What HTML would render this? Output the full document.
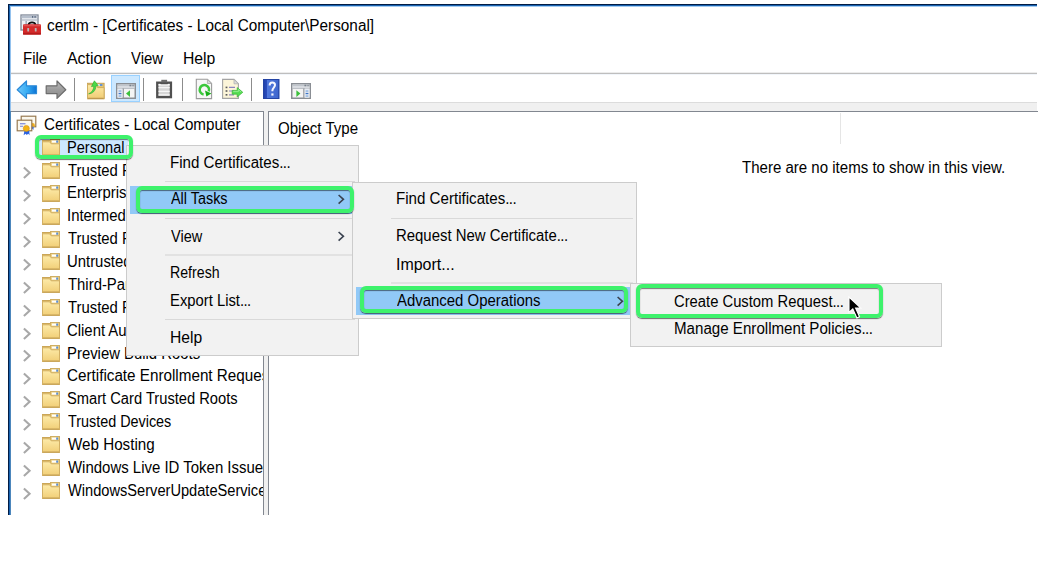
<!DOCTYPE html>
<html><head><meta charset="utf-8">
<style>
html,body{margin:0;padding:0;width:1045px;height:567px;overflow:hidden;background:#fff;}
body{position:relative;font-family:"Liberation Sans",sans-serif;font-size:15px;color:#000;}
.a{position:absolute;}
.t{position:absolute;white-space:nowrap;font-size:16px;line-height:17px;height:17px;transform-origin:0 0;}
.menu{position:absolute;background:#f2f2f2;border:1px solid #cccccc;box-sizing:border-box;}
.sep{position:absolute;height:1px;background:#d7d7d7;}
.grn{position:absolute;box-sizing:border-box;border:4px solid #3ef26c;border-radius:6px;box-shadow:0 1px 1px rgba(0,0,0,0.55), inset 0 1px 1px rgba(0,0,0,0.5);}
</style></head><body>
<div class="a" style="left:8px;top:4px;width:1029px;height:1px;background:#021c44"></div>
<div class="a" style="left:9px;top:5px;width:1028px;height:1px;background:#1862b0"></div>
<div class="a" style="left:10px;top:6px;width:1027px;height:1px;background:#a4ccf2"></div>
<div class="a" style="left:8px;top:4px;width:1px;height:511px;background:#021c44"></div>
<div class="a" style="left:9px;top:5px;width:1px;height:510px;background:#1862b0"></div>
<div class="a" style="left:10px;top:6px;width:1px;height:105px;background:#94c2ee"></div>
<div class="a" style="left:10px;top:111px;width:1px;height:404px;background:#4c86bc"></div>
<div class="a" style="left:11px;top:111px;width:1px;height:404px;background:#a4a8ac"></div>

<svg class="a" style="left:20px;top:14px" width="22" height="23" viewBox="0 0 22 23">
 <rect x="1" y="1" width="17" height="15" fill="#eef0f4" stroke="#7e8796" stroke-width="1.3"/>
 <rect x="1.6" y="1.6" width="15.8" height="2.6" fill="#b6bfcc"/>
 <rect x="12" y="2" width="1.2" height="1.8" fill="#5a6a80"/><rect x="14.5" y="2" width="1.2" height="1.8" fill="#5a6a80"/>
 <rect x="1.6" y="5.4" width="15.8" height="1.2" fill="#b0b8c4"/>
 <rect x="5.6" y="7" width="1" height="9" fill="#7a8aa0"/>
 <path d="M8.3 10.8C9.3 7.6 14.7 7.6 15.7 10.8" fill="none" stroke="#111" stroke-width="1.8"/>
 <rect x="3" y="10.3" width="18" height="10.3" rx="1" fill="#d42a2a"/>
 <rect x="3" y="18.8" width="18" height="1.8" fill="#b51c1c"/>
 <rect x="3.5" y="11" width="17" height="1.3" fill="#e25050"/>
 <rect x="7.3" y="14" width="1.8" height="3.5" rx="0.6" fill="#b9b9b9"/>
 <rect x="14.8" y="14" width="1.8" height="3.5" rx="0.6" fill="#b9b9b9"/>
</svg>

<svg class="a" style="left:16px;top:80px" width="22" height="20" viewBox="0 0 22 20">
 <defs><linearGradient id="bk" x1="0" y1="0" x2="1" y2="0"><stop offset="0" stop-color="#70c8fa"/><stop offset="0.55" stop-color="#34aaf2"/><stop offset="1" stop-color="#0c72d4"/></linearGradient></defs>
 <path d="M1.2 9.7L10.5 1V5.8H20.5V13.6H10.5V18.4Z" fill="url(#bk)" stroke="#2c8ad8" stroke-width="1.2" stroke-linejoin="round"/>
</svg>
<svg class="a" style="left:45px;top:80px" width="22" height="20" viewBox="0 0 22 20">
 <defs><linearGradient id="fw" x1="0" y1="0" x2="0" y2="1"><stop offset="0" stop-color="#bdbdbd"/><stop offset="0.5" stop-color="#9c9c9c"/><stop offset="1" stop-color="#8a8a8a"/></linearGradient></defs>
 <path d="M20.8 9.7L12 1V5.8H1.2V13.6H12V18.4Z" fill="url(#fw)" stroke="#6c6c6c" stroke-width="1.2" stroke-linejoin="round"/>
</svg>
<div class="a" style="left:74px;top:78px;width:1px;height:23px;background:#8c8c8c"></div>
<svg class="a" style="left:86px;top:80px" width="19" height="20" viewBox="0 0 19 20">
 <defs><linearGradient id="uf" x1="0" y1="0" x2="0" y2="1"><stop offset="0" stop-color="#fdeaa6"/><stop offset="1" stop-color="#f0cc74"/></linearGradient></defs>
 <rect x="1.5" y="3.3" width="16.6" height="15.4" fill="#e9c66e" stroke="#c9a458"/>
 <rect x="11" y="4.2" width="3" height="1.8" fill="#f4f4f4"/><rect x="13.6" y="4" width="3" height="2" rx="0.8" fill="#5f94dc"/>
 <path d="M1.5 4.6H10.2L11.6 7.6H18.1V18.7H1.5Z" fill="url(#uf)" stroke="#cfae62"/>
 <path d="M2 18.3H17.6" stroke="#b8924a"/>
 <path d="M2.6 13.8C5.6 12.6 7.6 10 7.9 6.2L5.4 6.6L8.4 0.8L12.2 5.6L9.9 5.9C9.8 10.8 6.6 13.6 2.6 13.8Z" fill="#4cda48" stroke="#2eaa2e" stroke-width="0.6"/>
</svg>
<div class="a" style="left:111px;top:75px;width:27px;height:25px;background:#cce8ff;border:1px solid #99d1ff"></div>
<svg class="a" style="left:116px;top:83px" width="20" height="16" viewBox="0 0 20 16">
 <rect x="0.75" y="0.75" width="18.5" height="14.5" fill="#f4f4f4" stroke="#8a8e94" stroke-width="1.5"/>
 <rect x="1.5" y="1.5" width="17" height="2.2" fill="#c0c5cc"/>
 <rect x="13.6" y="1.7" width="1.1" height="1.8" fill="#5d6672"/><rect x="15.6" y="1.7" width="1.1" height="1.8" fill="#8a929c"/><rect x="17.2" y="1.7" width="1.1" height="1.8" fill="#8a929c"/>
 <rect x="1.5" y="3.7" width="17" height="1" fill="#eceef1"/>
 <rect x="1.5" y="4.7" width="17" height="1" fill="#a4aab2"/>
 <rect x="6.5" y="5.5" width="1.3" height="9.3" fill="#8a8e94"/>
 <rect x="1.5" y="5.7" width="5" height="9" fill="#e6ebf2"/>
 <rect x="2.6" y="7.4" width="2.8" height="1.3" fill="#86aee0"/><rect x="2.6" y="9.9" width="2.8" height="1.3" fill="#3a74c8"/><rect x="2.6" y="12.4" width="2.8" height="1.3" fill="#86aee0"/>
 <path d="M10 10.6L14 7.3V13.9Z" fill="#3cc03c"/>
</svg>
<div class="a" style="left:143px;top:78px;width:1px;height:23px;background:#8c8c8c"></div>
<svg class="a" style="left:156px;top:79px" width="17" height="20" viewBox="0 0 17 20">
 <rect x="1.3" y="3.7" width="13.6" height="14.4" fill="#d6d6d6" stroke="#505050" stroke-width="2.4"/>
 <rect x="2.5" y="4.9" width="11.2" height="1.6" fill="#fbfbfb"/>
 <path d="M2.5 8.6H13.7M2.5 12.3H13.7M2.5 15.8H13.7" stroke="#f6f6f6" stroke-width="1.2"/>
 <rect x="5.3" y="0.8" width="5.8" height="3" fill="#6c6c6c"/>
 <path d="M3.8 3.4H12.6L11.6 5.2H4.8Z" fill="#505050"/>
</svg>
<div class="a" style="left:182px;top:78px;width:1px;height:23px;background:#8c8c8c"></div>
<svg class="a" style="left:195px;top:78px" width="18" height="22" viewBox="0 0 18 22">
 <path d="M1.3 1.3H12.4L16.6 5.5V20.6H1.3Z" fill="#f7f7f7" stroke="#9a9a9a" stroke-width="1.1"/>
 <path d="M12.4 1.3V5.5H16.6Z" fill="#d8d8d8" stroke="#a8a8a8" stroke-width="0.8"/>
 <path d="M8.6 16.4A4.7 4.7 0 1 1 13.8 13.4" fill="none" stroke="#3cc83c" stroke-width="2.5"/>
 <path d="M10 12.4L16.4 15.6L11.4 18.6Z" fill="#18b018"/>
</svg>
<svg class="a" style="left:222px;top:78px" width="22" height="22" viewBox="0 0 22 22">
 <path d="M0.6 1.4H12L16.4 5.8V20.4H0.6Z" fill="#fcf5d9" stroke="#a4a4a4" stroke-width="1.1"/>
 <path d="M12 1.4V5.8H16.4Z" fill="#dcdcdc" stroke="#b0b0b0" stroke-width="0.8"/>
 <rect x="3.6" y="8.6" width="1.8" height="1.6" fill="#5a5a5a"/><rect x="3.6" y="12.2" width="1.8" height="1.6" fill="#5a5a5a"/><rect x="3.6" y="16" width="1.8" height="1.6" fill="#5a5a5a"/>
 <path d="M7 9.4H13M7 13H12M7 16.8H12" stroke="#8a84c0" stroke-width="1.2"/>
 <path d="M10.2 12.4H15.2V9.6L20.8 14.3L15.2 19V16.2H10.2Z" fill="#56dc52" stroke="#36b634" stroke-width="0.7" stroke-linejoin="round"/>
 <path d="M11.2 13.6H16.4V11.6L19.2 14.2" fill="none" stroke="#9cf09a" stroke-width="0.8"/>
</svg>
<div class="a" style="left:251px;top:78px;width:1px;height:23px;background:#8c8c8c"></div>
<svg class="a" style="left:263px;top:79px" width="17" height="20" viewBox="0 0 17 20">
 <defs><linearGradient id="hp" x1="0" y1="0" x2="1" y2="0"><stop offset="0" stop-color="#1e3ea8"/><stop offset="0.22" stop-color="#2a4cba"/><stop offset="0.26" stop-color="#5078dc"/><stop offset="1" stop-color="#3c64cc"/></linearGradient></defs>
 <rect x="0" y="0" width="16.3" height="20" fill="url(#hp)"/>
 <rect x="0.5" y="0.5" width="15.3" height="19" fill="none" stroke="#2444a4" stroke-width="1"/>
 <path d="M6.6 6.4C6.6 4.4 7.8 3.4 9.3 3.4C10.9 3.4 12 4.5 12 6C12 8.3 9.6 8.8 9.4 11.4V12.3" fill="none" stroke="#f4f6ff" stroke-width="2"/>
 <rect x="8.3" y="14.4" width="2.2" height="2.2" fill="#f4f6ff"/>
</svg>
<svg class="a" style="left:291px;top:83px" width="20" height="16" viewBox="0 0 20 16">
 <rect x="0.75" y="0.75" width="18.5" height="14.5" fill="#f4f4f4" stroke="#8a8e94" stroke-width="1.5"/>
 <rect x="1.5" y="1.5" width="17" height="2.2" fill="#c0c5cc"/>
 <rect x="13.6" y="1.7" width="1.1" height="1.8" fill="#5d6672"/><rect x="15.6" y="1.7" width="1.1" height="1.8" fill="#8a929c"/><rect x="17.2" y="1.7" width="1.1" height="1.8" fill="#8a929c"/>
 <rect x="1.5" y="3.7" width="17" height="1" fill="#eceef1"/>
 <rect x="1.5" y="4.7" width="17" height="1" fill="#a4aab2"/>
 <rect x="12.3" y="5.5" width="1.3" height="9.3" fill="#8a8e94"/>
 <rect x="13.6" y="5.7" width="4.9" height="9" fill="#e6ebf2"/>
 <rect x="14.6" y="7.4" width="2.8" height="1.3" fill="#86aee0"/><rect x="14.6" y="9.9" width="2.8" height="1.3" fill="#3a74c8"/><rect x="14.6" y="12.4" width="2.8" height="1.3" fill="#86aee0"/>
 <path d="M9.4 10.6L5.4 7.3V13.9Z" fill="#3cc03c"/>
</svg>
<div class="t" style="left:47.04px;top:17.00px;transform:scaleX(0.9579);">certlm - [Certificates - Local Computer\Personal]</div>
<div class="t" style="left:22.76px;top:50.00px;transform:scaleX(0.9375);">File</div>
<div class="t" style="left:66.80px;top:50.00px;transform:scaleX(0.9955);">Action</div>
<div class="t" style="left:131.00px;top:50.00px;transform:scaleX(0.9294);">View</div>
<div class="t" style="left:182.72px;top:50.00px;transform:scaleX(0.9839);">Help</div>
<div class="a" style="left:11px;top:72px;width:1026px;height:1px;background:#ececec"></div>
<div class="a" style="left:11px;top:73px;width:1026px;height:1px;background:#bebebe"></div>
<div class="a" style="left:11px;top:74px;width:1026px;height:1px;background:#f2f6fb"></div>
<div class="a" style="left:11px;top:102px;width:1026px;height:1px;background:#dcdcdc"></div>
<div class="a" style="left:11px;top:103px;width:1026px;height:412px;background:#f0f0f0"></div>
<div class="a" style="left:11px;top:111px;width:252px;height:403px;background:#fff;border-top:1px solid #828790;border-right:1px solid #828790;overflow:hidden">
<div class="t" style="left:32.55px;top:4.00px;transform:scaleX(0.9490);">Certificates - Local Computer</div>
<div class="t" style="left:56.39px;top:27.00px;transform:scaleX(0.9100);">Personal</div>
<div class="t" style="left:57.30px;top:50.00px;transform:scaleX(0.9300);">Trusted Root Certification Authorities</div>
<div class="t" style="left:56.37px;top:72.00px;transform:scaleX(0.9300);">Enterprise Trust</div>
<div class="t" style="left:56.37px;top:95.00px;transform:scaleX(0.9300);">Intermediate Certification Authorities</div>
<div class="t" style="left:57.30px;top:118.00px;transform:scaleX(0.9300);">Trusted Publishers</div>
<div class="t" style="left:56.37px;top:141.00px;transform:scaleX(0.9300);">Untrusted Certificates</div>
<div class="t" style="left:57.30px;top:164.00px;transform:scaleX(0.9300);">Third-Party Root Certification Authorities</div>
<div class="t" style="left:57.30px;top:187.00px;transform:scaleX(0.9300);">Trusted People</div>
<div class="t" style="left:56.37px;top:210.00px;transform:scaleX(0.9300);">Client Authentication Issuers</div>
<div class="t" style="left:56.37px;top:233.00px;transform:scaleX(0.9300);">Preview Build Roots</div>
<div class="t" style="left:56.35px;top:255.00px;transform:scaleX(0.9520);">Certificate Enrollment Requests</div>
<div class="t" style="left:56.38px;top:278.00px;transform:scaleX(0.9180);">Smart Card Trusted Roots</div>
<div class="t" style="left:57.30px;top:301.00px;transform:scaleX(0.8980);">Trusted Devices</div>
<div class="t" style="left:57.30px;top:324.00px;transform:scaleX(0.9490);">Web Hosting</div>
<div class="t" style="left:57.30px;top:347.00px;transform:scaleX(0.9350);">Windows Live ID Token Issuer</div>
<div class="t" style="left:57.30px;top:370.00px;transform:scaleX(0.9140);">WindowsServerUpdateServices</div>
</div>
<div class="a" style="left:268px;top:111px;width:769px;height:403px;background:#fff;border-top:1px solid #828790;border-left:1px solid #828790"></div>

<div class="a" style="left:840px;top:113px;width:1px;height:31px;background:#e5e5e5"></div>

<div class="t" style="left:278.06px;top:120.00px;transform:scaleX(0.9417);">Object Type</div>
<div class="t" style="left:741.50px;top:159.00px;transform:scaleX(0.9398);">There are no items to show in this view.</div>

<svg class="a" style="left:16px;top:115px" width="21" height="21" viewBox="0 0 21 21">
 <rect x="5.2" y="1.2" width="14.6" height="10.6" fill="#fbf8ee" stroke="#94764c" stroke-width="1.15"/>
 <circle cx="16.6" cy="10.2" r="2.3" fill="#f0b020"/>
 <path d="M15.2 11.5L14.6 14.8L16.3 13.8L17.4 15L17.8 11.8Z" fill="#3c6ee0"/>
 <rect x="1.2" y="5.2" width="14.6" height="10.6" fill="#fbf8ee" stroke="#94764c" stroke-width="1.15"/>
 <path d="M4 8.7H9.5" stroke="#8a96e0" stroke-width="1.4"/><path d="M4 11.3H7" stroke="#8a96e0" stroke-width="1.2"/>
 <path d="M8.4 16L7.6 20.2L9.7 18.8L10.7 20L11.6 16Z" fill="#2a62e0"/>
 <path d="M11 16L10.6 20L12.3 18.8L13.6 20.2L13.2 16Z" fill="#2a62e0"/>
 <circle cx="10.3" cy="13.4" r="3" fill="#f2b318" stroke="#d8920c" stroke-width="0.6"/>
</svg>
<div class="a" style="left:38px;top:139px;width:90px;height:16px;background:#cce8ff"></div>
<div class="t" style="left:67.39px;top:139.00px;transform:scaleX(0.9100);">Personal</div>
<svg class="a" style="left:42px;top:139.0px" width="18" height="17" viewBox="0 0 18 17"><defs><linearGradient id="fg0" x1="0" y1="0" x2="0" y2="1"><stop offset="0" stop-color="#fdeba9"/><stop offset="1" stop-color="#f1ce76"/></linearGradient></defs><rect x="0.5" y="1.5" width="17" height="15" fill="#e9c56c" stroke="#cba657"/><rect x="8.5" y="0.5" width="9" height="4.5" fill="#efd48a" stroke="#cfae62"/><rect x="10" y="1.6" width="4.6" height="2" fill="#fff"/><rect x="14.2" y="1.5" width="2" height="2.2" fill="#5b8fd8"/><path d="M0.5 2.8H7.6L9.2 4.8H17.5V16.5H0.5Z" fill="url(#fg0)" stroke="#d2b064"/><path d="M1 16H17" stroke="#c29e55"/></svg><svg class="a" style="left:42px;top:161.9px" width="18" height="17" viewBox="0 0 18 17"><defs><linearGradient id="fg1" x1="0" y1="0" x2="0" y2="1"><stop offset="0" stop-color="#fdeba9"/><stop offset="1" stop-color="#f1ce76"/></linearGradient></defs><rect x="0.5" y="1.5" width="17" height="15" fill="#e9c56c" stroke="#cba657"/><rect x="8.5" y="0.5" width="9" height="4.5" fill="#efd48a" stroke="#cfae62"/><rect x="10" y="1.6" width="4.6" height="2" fill="#fff"/><rect x="14.2" y="1.5" width="2" height="2.2" fill="#5b8fd8"/><path d="M0.5 2.8H7.6L9.2 4.8H17.5V16.5H0.5Z" fill="url(#fg1)" stroke="#d2b064"/><path d="M1 16H17" stroke="#c29e55"/></svg><svg class="a" style="left:22px;top:166.4px" width="10" height="14" viewBox="0 0 10 14"><path d="M1.9 1.4L7.6 6.7L1.9 12" fill="none" stroke="#a8a8a8" stroke-width="2.1"/></svg><svg class="a" style="left:42px;top:184.7px" width="18" height="17" viewBox="0 0 18 17"><defs><linearGradient id="fg2" x1="0" y1="0" x2="0" y2="1"><stop offset="0" stop-color="#fdeba9"/><stop offset="1" stop-color="#f1ce76"/></linearGradient></defs><rect x="0.5" y="1.5" width="17" height="15" fill="#e9c56c" stroke="#cba657"/><rect x="8.5" y="0.5" width="9" height="4.5" fill="#efd48a" stroke="#cfae62"/><rect x="10" y="1.6" width="4.6" height="2" fill="#fff"/><rect x="14.2" y="1.5" width="2" height="2.2" fill="#5b8fd8"/><path d="M0.5 2.8H7.6L9.2 4.8H17.5V16.5H0.5Z" fill="url(#fg2)" stroke="#d2b064"/><path d="M1 16H17" stroke="#c29e55"/></svg><svg class="a" style="left:22px;top:189.2px" width="10" height="14" viewBox="0 0 10 14"><path d="M1.9 1.4L7.6 6.7L1.9 12" fill="none" stroke="#a8a8a8" stroke-width="2.1"/></svg><svg class="a" style="left:42px;top:207.6px" width="18" height="17" viewBox="0 0 18 17"><defs><linearGradient id="fg3" x1="0" y1="0" x2="0" y2="1"><stop offset="0" stop-color="#fdeba9"/><stop offset="1" stop-color="#f1ce76"/></linearGradient></defs><rect x="0.5" y="1.5" width="17" height="15" fill="#e9c56c" stroke="#cba657"/><rect x="8.5" y="0.5" width="9" height="4.5" fill="#efd48a" stroke="#cfae62"/><rect x="10" y="1.6" width="4.6" height="2" fill="#fff"/><rect x="14.2" y="1.5" width="2" height="2.2" fill="#5b8fd8"/><path d="M0.5 2.8H7.6L9.2 4.8H17.5V16.5H0.5Z" fill="url(#fg3)" stroke="#d2b064"/><path d="M1 16H17" stroke="#c29e55"/></svg><svg class="a" style="left:22px;top:212.1px" width="10" height="14" viewBox="0 0 10 14"><path d="M1.9 1.4L7.6 6.7L1.9 12" fill="none" stroke="#a8a8a8" stroke-width="2.1"/></svg><svg class="a" style="left:42px;top:230.5px" width="18" height="17" viewBox="0 0 18 17"><defs><linearGradient id="fg4" x1="0" y1="0" x2="0" y2="1"><stop offset="0" stop-color="#fdeba9"/><stop offset="1" stop-color="#f1ce76"/></linearGradient></defs><rect x="0.5" y="1.5" width="17" height="15" fill="#e9c56c" stroke="#cba657"/><rect x="8.5" y="0.5" width="9" height="4.5" fill="#efd48a" stroke="#cfae62"/><rect x="10" y="1.6" width="4.6" height="2" fill="#fff"/><rect x="14.2" y="1.5" width="2" height="2.2" fill="#5b8fd8"/><path d="M0.5 2.8H7.6L9.2 4.8H17.5V16.5H0.5Z" fill="url(#fg4)" stroke="#d2b064"/><path d="M1 16H17" stroke="#c29e55"/></svg><svg class="a" style="left:22px;top:235.0px" width="10" height="14" viewBox="0 0 10 14"><path d="M1.9 1.4L7.6 6.7L1.9 12" fill="none" stroke="#a8a8a8" stroke-width="2.1"/></svg><svg class="a" style="left:42px;top:253.4px" width="18" height="17" viewBox="0 0 18 17"><defs><linearGradient id="fg5" x1="0" y1="0" x2="0" y2="1"><stop offset="0" stop-color="#fdeba9"/><stop offset="1" stop-color="#f1ce76"/></linearGradient></defs><rect x="0.5" y="1.5" width="17" height="15" fill="#e9c56c" stroke="#cba657"/><rect x="8.5" y="0.5" width="9" height="4.5" fill="#efd48a" stroke="#cfae62"/><rect x="10" y="1.6" width="4.6" height="2" fill="#fff"/><rect x="14.2" y="1.5" width="2" height="2.2" fill="#5b8fd8"/><path d="M0.5 2.8H7.6L9.2 4.8H17.5V16.5H0.5Z" fill="url(#fg5)" stroke="#d2b064"/><path d="M1 16H17" stroke="#c29e55"/></svg><svg class="a" style="left:22px;top:257.9px" width="10" height="14" viewBox="0 0 10 14"><path d="M1.9 1.4L7.6 6.7L1.9 12" fill="none" stroke="#a8a8a8" stroke-width="2.1"/></svg><svg class="a" style="left:42px;top:276.2px" width="18" height="17" viewBox="0 0 18 17"><defs><linearGradient id="fg6" x1="0" y1="0" x2="0" y2="1"><stop offset="0" stop-color="#fdeba9"/><stop offset="1" stop-color="#f1ce76"/></linearGradient></defs><rect x="0.5" y="1.5" width="17" height="15" fill="#e9c56c" stroke="#cba657"/><rect x="8.5" y="0.5" width="9" height="4.5" fill="#efd48a" stroke="#cfae62"/><rect x="10" y="1.6" width="4.6" height="2" fill="#fff"/><rect x="14.2" y="1.5" width="2" height="2.2" fill="#5b8fd8"/><path d="M0.5 2.8H7.6L9.2 4.8H17.5V16.5H0.5Z" fill="url(#fg6)" stroke="#d2b064"/><path d="M1 16H17" stroke="#c29e55"/></svg><svg class="a" style="left:22px;top:280.7px" width="10" height="14" viewBox="0 0 10 14"><path d="M1.9 1.4L7.6 6.7L1.9 12" fill="none" stroke="#a8a8a8" stroke-width="2.1"/></svg><svg class="a" style="left:42px;top:299.1px" width="18" height="17" viewBox="0 0 18 17"><defs><linearGradient id="fg7" x1="0" y1="0" x2="0" y2="1"><stop offset="0" stop-color="#fdeba9"/><stop offset="1" stop-color="#f1ce76"/></linearGradient></defs><rect x="0.5" y="1.5" width="17" height="15" fill="#e9c56c" stroke="#cba657"/><rect x="8.5" y="0.5" width="9" height="4.5" fill="#efd48a" stroke="#cfae62"/><rect x="10" y="1.6" width="4.6" height="2" fill="#fff"/><rect x="14.2" y="1.5" width="2" height="2.2" fill="#5b8fd8"/><path d="M0.5 2.8H7.6L9.2 4.8H17.5V16.5H0.5Z" fill="url(#fg7)" stroke="#d2b064"/><path d="M1 16H17" stroke="#c29e55"/></svg><svg class="a" style="left:22px;top:303.6px" width="10" height="14" viewBox="0 0 10 14"><path d="M1.9 1.4L7.6 6.7L1.9 12" fill="none" stroke="#a8a8a8" stroke-width="2.1"/></svg><svg class="a" style="left:42px;top:322.0px" width="18" height="17" viewBox="0 0 18 17"><defs><linearGradient id="fg8" x1="0" y1="0" x2="0" y2="1"><stop offset="0" stop-color="#fdeba9"/><stop offset="1" stop-color="#f1ce76"/></linearGradient></defs><rect x="0.5" y="1.5" width="17" height="15" fill="#e9c56c" stroke="#cba657"/><rect x="8.5" y="0.5" width="9" height="4.5" fill="#efd48a" stroke="#cfae62"/><rect x="10" y="1.6" width="4.6" height="2" fill="#fff"/><rect x="14.2" y="1.5" width="2" height="2.2" fill="#5b8fd8"/><path d="M0.5 2.8H7.6L9.2 4.8H17.5V16.5H0.5Z" fill="url(#fg8)" stroke="#d2b064"/><path d="M1 16H17" stroke="#c29e55"/></svg><svg class="a" style="left:22px;top:326.5px" width="10" height="14" viewBox="0 0 10 14"><path d="M1.9 1.4L7.6 6.7L1.9 12" fill="none" stroke="#a8a8a8" stroke-width="2.1"/></svg><svg class="a" style="left:42px;top:344.8px" width="18" height="17" viewBox="0 0 18 17"><defs><linearGradient id="fg9" x1="0" y1="0" x2="0" y2="1"><stop offset="0" stop-color="#fdeba9"/><stop offset="1" stop-color="#f1ce76"/></linearGradient></defs><rect x="0.5" y="1.5" width="17" height="15" fill="#e9c56c" stroke="#cba657"/><rect x="8.5" y="0.5" width="9" height="4.5" fill="#efd48a" stroke="#cfae62"/><rect x="10" y="1.6" width="4.6" height="2" fill="#fff"/><rect x="14.2" y="1.5" width="2" height="2.2" fill="#5b8fd8"/><path d="M0.5 2.8H7.6L9.2 4.8H17.5V16.5H0.5Z" fill="url(#fg9)" stroke="#d2b064"/><path d="M1 16H17" stroke="#c29e55"/></svg><svg class="a" style="left:22px;top:349.3px" width="10" height="14" viewBox="0 0 10 14"><path d="M1.9 1.4L7.6 6.7L1.9 12" fill="none" stroke="#a8a8a8" stroke-width="2.1"/></svg><svg class="a" style="left:42px;top:367.7px" width="18" height="17" viewBox="0 0 18 17"><defs><linearGradient id="fg10" x1="0" y1="0" x2="0" y2="1"><stop offset="0" stop-color="#fdeba9"/><stop offset="1" stop-color="#f1ce76"/></linearGradient></defs><rect x="0.5" y="1.5" width="17" height="15" fill="#e9c56c" stroke="#cba657"/><rect x="8.5" y="0.5" width="9" height="4.5" fill="#efd48a" stroke="#cfae62"/><rect x="10" y="1.6" width="4.6" height="2" fill="#fff"/><rect x="14.2" y="1.5" width="2" height="2.2" fill="#5b8fd8"/><path d="M0.5 2.8H7.6L9.2 4.8H17.5V16.5H0.5Z" fill="url(#fg10)" stroke="#d2b064"/><path d="M1 16H17" stroke="#c29e55"/></svg><svg class="a" style="left:22px;top:372.2px" width="10" height="14" viewBox="0 0 10 14"><path d="M1.9 1.4L7.6 6.7L1.9 12" fill="none" stroke="#a8a8a8" stroke-width="2.1"/></svg><svg class="a" style="left:42px;top:390.6px" width="18" height="17" viewBox="0 0 18 17"><defs><linearGradient id="fg11" x1="0" y1="0" x2="0" y2="1"><stop offset="0" stop-color="#fdeba9"/><stop offset="1" stop-color="#f1ce76"/></linearGradient></defs><rect x="0.5" y="1.5" width="17" height="15" fill="#e9c56c" stroke="#cba657"/><rect x="8.5" y="0.5" width="9" height="4.5" fill="#efd48a" stroke="#cfae62"/><rect x="10" y="1.6" width="4.6" height="2" fill="#fff"/><rect x="14.2" y="1.5" width="2" height="2.2" fill="#5b8fd8"/><path d="M0.5 2.8H7.6L9.2 4.8H17.5V16.5H0.5Z" fill="url(#fg11)" stroke="#d2b064"/><path d="M1 16H17" stroke="#c29e55"/></svg><svg class="a" style="left:22px;top:395.1px" width="10" height="14" viewBox="0 0 10 14"><path d="M1.9 1.4L7.6 6.7L1.9 12" fill="none" stroke="#a8a8a8" stroke-width="2.1"/></svg><svg class="a" style="left:42px;top:413.4px" width="18" height="17" viewBox="0 0 18 17"><defs><linearGradient id="fg12" x1="0" y1="0" x2="0" y2="1"><stop offset="0" stop-color="#fdeba9"/><stop offset="1" stop-color="#f1ce76"/></linearGradient></defs><rect x="0.5" y="1.5" width="17" height="15" fill="#e9c56c" stroke="#cba657"/><rect x="8.5" y="0.5" width="9" height="4.5" fill="#efd48a" stroke="#cfae62"/><rect x="10" y="1.6" width="4.6" height="2" fill="#fff"/><rect x="14.2" y="1.5" width="2" height="2.2" fill="#5b8fd8"/><path d="M0.5 2.8H7.6L9.2 4.8H17.5V16.5H0.5Z" fill="url(#fg12)" stroke="#d2b064"/><path d="M1 16H17" stroke="#c29e55"/></svg><svg class="a" style="left:22px;top:417.9px" width="10" height="14" viewBox="0 0 10 14"><path d="M1.9 1.4L7.6 6.7L1.9 12" fill="none" stroke="#a8a8a8" stroke-width="2.1"/></svg><svg class="a" style="left:42px;top:436.3px" width="18" height="17" viewBox="0 0 18 17"><defs><linearGradient id="fg13" x1="0" y1="0" x2="0" y2="1"><stop offset="0" stop-color="#fdeba9"/><stop offset="1" stop-color="#f1ce76"/></linearGradient></defs><rect x="0.5" y="1.5" width="17" height="15" fill="#e9c56c" stroke="#cba657"/><rect x="8.5" y="0.5" width="9" height="4.5" fill="#efd48a" stroke="#cfae62"/><rect x="10" y="1.6" width="4.6" height="2" fill="#fff"/><rect x="14.2" y="1.5" width="2" height="2.2" fill="#5b8fd8"/><path d="M0.5 2.8H7.6L9.2 4.8H17.5V16.5H0.5Z" fill="url(#fg13)" stroke="#d2b064"/><path d="M1 16H17" stroke="#c29e55"/></svg><svg class="a" style="left:22px;top:440.8px" width="10" height="14" viewBox="0 0 10 14"><path d="M1.9 1.4L7.6 6.7L1.9 12" fill="none" stroke="#a8a8a8" stroke-width="2.1"/></svg><svg class="a" style="left:42px;top:459.2px" width="18" height="17" viewBox="0 0 18 17"><defs><linearGradient id="fg14" x1="0" y1="0" x2="0" y2="1"><stop offset="0" stop-color="#fdeba9"/><stop offset="1" stop-color="#f1ce76"/></linearGradient></defs><rect x="0.5" y="1.5" width="17" height="15" fill="#e9c56c" stroke="#cba657"/><rect x="8.5" y="0.5" width="9" height="4.5" fill="#efd48a" stroke="#cfae62"/><rect x="10" y="1.6" width="4.6" height="2" fill="#fff"/><rect x="14.2" y="1.5" width="2" height="2.2" fill="#5b8fd8"/><path d="M0.5 2.8H7.6L9.2 4.8H17.5V16.5H0.5Z" fill="url(#fg14)" stroke="#d2b064"/><path d="M1 16H17" stroke="#c29e55"/></svg><svg class="a" style="left:22px;top:463.7px" width="10" height="14" viewBox="0 0 10 14"><path d="M1.9 1.4L7.6 6.7L1.9 12" fill="none" stroke="#a8a8a8" stroke-width="2.1"/></svg><svg class="a" style="left:42px;top:482.1px" width="18" height="17" viewBox="0 0 18 17"><defs><linearGradient id="fg15" x1="0" y1="0" x2="0" y2="1"><stop offset="0" stop-color="#fdeba9"/><stop offset="1" stop-color="#f1ce76"/></linearGradient></defs><rect x="0.5" y="1.5" width="17" height="15" fill="#e9c56c" stroke="#cba657"/><rect x="8.5" y="0.5" width="9" height="4.5" fill="#efd48a" stroke="#cfae62"/><rect x="10" y="1.6" width="4.6" height="2" fill="#fff"/><rect x="14.2" y="1.5" width="2" height="2.2" fill="#5b8fd8"/><path d="M0.5 2.8H7.6L9.2 4.8H17.5V16.5H0.5Z" fill="url(#fg15)" stroke="#d2b064"/><path d="M1 16H17" stroke="#c29e55"/></svg><svg class="a" style="left:22px;top:486.6px" width="10" height="14" viewBox="0 0 10 14"><path d="M1.9 1.4L7.6 6.7L1.9 12" fill="none" stroke="#a8a8a8" stroke-width="2.1"/></svg><div class="menu" style="left:126px;top:145px;width:233px;height:211px"></div>
<div class="sep" style="left:165px;top:181px;width:190px;height:1px;background:#d9d9d9"></div>
<div class="sep" style="left:165px;top:218px;width:190px;height:1px;background:#d9d9d9"></div>
<div class="sep" style="left:165px;top:254px;width:190px;height:2px;background:#e2e2e2"></div>
<div class="sep" style="left:165px;top:319px;width:190px;height:1px;background:#d9d9d9"></div>
<div class="a" style="left:130px;top:186px;width:224px;height:28px;background:#91c9f7"></div>
<div class="t" style="left:170.26px;top:154.00px;transform:scaleX(0.9448);">Find Certificates<span style="letter-spacing:-0.6px">...</span></div>
<div class="t" style="left:171.20px;top:190.00px;transform:scaleX(0.9000);">All Tasks</div>
<div class="t" style="left:171.20px;top:228.00px;transform:scaleX(0.9059);">View</div>
<div class="t" style="left:170.31px;top:264.00px;transform:scaleX(0.8852);">Refresh</div>
<div class="t" style="left:170.27px;top:292.00px;transform:scaleX(0.9259);">Export List<span style="letter-spacing:-0.6px">...</span></div>
<div class="t" style="left:170.22px;top:329.00px;transform:scaleX(0.9774);">Help</div>
<svg class="a" style="left:337px;top:194px" width="9" height="11" viewBox="0 0 9 11"><path d="M1.6 1L6.4 5.3L1.6 9.6" fill="none" stroke="#3a4250" stroke-width="1.6"/></svg>
<svg class="a" style="left:337px;top:231px" width="9" height="11" viewBox="0 0 9 11"><path d="M1.6 1L6.4 5.3L1.6 9.6" fill="none" stroke="#3a4250" stroke-width="1.6"/></svg>
<div class="menu" style="left:352px;top:182px;width:285px;height:137px"></div>
<div class="sep" style="left:391px;top:218px;width:242px;height:1px;background:#d9d9d9"></div>
<div class="sep" style="left:391px;top:282px;width:242px;height:2px;background:#e2e2e2"></div>
<div class="a" style="left:356px;top:287px;width:276px;height:28px;background:#91c9f7"></div>
<div class="t" style="left:395.76px;top:190.00px;transform:scaleX(0.9448);">Find Certificates<span style="letter-spacing:-0.6px">...</span></div>
<div class="t" style="left:395.77px;top:227.00px;transform:scaleX(0.9319);">Request New Certificate<span style="letter-spacing:-0.6px">...</span></div>
<div class="t" style="left:395.70px;top:256.00px;transform:scaleX(0.9982);">Import...</div>
<div class="t" style="left:396.70px;top:292.00px;transform:scaleX(0.9331);">Advanced Operations</div>
<svg class="a" style="left:615.5px;top:295.5px" width="9" height="11" viewBox="0 0 9 11"><path d="M1.6 1L6.4 5.3L1.6 9.6" fill="none" stroke="#3a4250" stroke-width="1.6"/></svg>
<div class="menu" style="left:630px;top:283px;width:312px;height:64px"></div>
<div class="t" style="left:674.08px;top:293.00px;transform:scaleX(0.9238);">Create Custom Request<span style="letter-spacing:-0.6px">...</span></div>
<div class="t" style="left:674.05px;top:320.00px;transform:scaleX(0.9452);">Manage Enrollment Policies<span style="letter-spacing:-0.6px">...</span></div>
<div class="grn" style="left:35px;top:135px;width:98px;height:24px"></div>
<div class="grn" style="left:136px;top:186px;width:218px;height:27px"></div>
<div class="grn" style="left:360px;top:286px;width:268px;height:27px"></div>
<div class="grn" style="left:636px;top:284px;width:247px;height:34px"></div>
<svg class="a" style="left:847px;top:295px" width="16" height="25" viewBox="0 0 16 25"><path d="M2 2V17.3L5.8 13.8L9.9 23L12.5 21.8L8.6 13H13.8Z" fill="#000" stroke="#fff" stroke-width="1.1" stroke-linejoin="miter"/></svg>
</body></html>
